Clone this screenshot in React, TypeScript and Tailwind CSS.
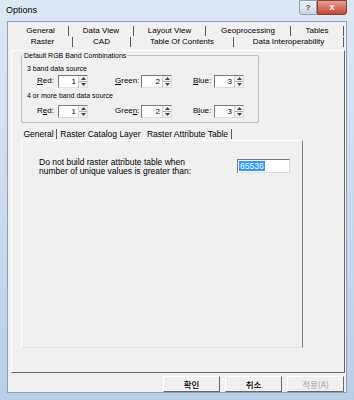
import React from 'react'

const font = { fontFamily: '"Liberation Sans", Arial, sans-serif' }

function Spin({ value, w }: { value: string; w: number }) {
  return (
    <div
      className="flex h-[13px] border border-t-[#7a7a7a] border-l-[#7a7a7a] border-r-[#dcdcdc] border-b-[#dcdcdc] bg-white"
      style={{ width: w }}
    >
      <div className="flex-1 text-right pr-[2px] text-[8px] leading-[11px] text-black">{value}</div>
      <div className="w-[9px] flex flex-col border-l border-[#d0d0d0] bg-[#f0f0f0]">
        <div className="flex-1 flex items-center justify-center border-b border-[#b0b0b0]">
          <svg width="5" height="3" viewBox="0 0 5 3"><path d="M0 3 L2.5 0 L5 3Z" fill="#444" /></svg>
        </div>
        <div className="flex-1 flex items-center justify-center">
          <svg width="5" height="3" viewBox="0 0 5 3"><path d="M0 0 L2.5 3 L5 0Z" fill="#444" /></svg>
        </div>
      </div>
    </div>
  )
}

function U({ children }: { children: React.ReactNode }) {
  return <span className="underline underline-offset-1">{children}</span>
}

function BandRow({ first }: { first: boolean }) {
  return (
    <div className="flex items-center h-[14px] pl-[15px] text-[8px] text-black">
      <span className="w-[21px]">{first ? <><U>R</U>ed:</> : <>R<U>e</U>d:</>}</span>
      <Spin value="1" w={30} />
      <span className="ml-[27px] w-[26px]">{first ? <><U>G</U>reen:</> : <>Gree<U>n</U>:</>}</span>
      <Spin value="2" w={31} />
      <span className="ml-[21px] w-[21px]">{first ? <><U>B</U>lue:</> : <>B<U>l</U>ue:</>}</span>
      <Spin value="3" w={30} />
    </div>
  )
}

function Tab({ label, w, sep = true }: { label: string; w: number; sep?: boolean }) {
  return (
    <div className="flex items-center h-full" style={{ width: w }}>
      <span className="flex-1 text-center whitespace-nowrap">{label}</span>
      {sep && <span className="w-px h-[10px] bg-[#5a5a5a]" />}
    </div>
  )
}

function Button({ label, disabled }: { label: string; disabled?: boolean }) {
  return (
    <div className="w-[57px] h-[16px] border border-t-white border-l-white border-r-[#696969] border-b-[#696969] bg-[#f0f0f0] flex items-center justify-center">
      <span
        className={disabled ? 'text-[8.5px] text-[#a0a0a0]' : 'text-[8.5px] text-black font-medium'}
        style={{ fontFamily: '"Noto Sans CJK KR", "Liberation Sans", sans-serif' }}
      >
        {label}
      </span>
    </div>
  )
}

export default function App() {
  return (
    <div
      className="w-[354px] h-[400px] flex flex-col bg-gradient-to-b from-[#dde8f3] to-[#b9cfe8] overflow-hidden"
      style={font}
    >
      {/* title bar */}
      <div className="h-[21px] flex items-start shrink-0">
        <span className="ml-[6px] mt-[4px] text-[9px] text-black">Options</span>
        <div className="ml-auto mr-[7px] flex">
          <div className="w-[18px] h-[15px] border border-[#8d9cb0] rounded-bl-[3px] bg-gradient-to-b from-[#eef2f7] to-[#c9d5e3] flex items-center justify-center text-[8px] text-[#445] font-bold">
            ?
          </div>
          <div className="w-[30px] h-[15px] border border-[#8a3b3b] rounded-br-[3px] bg-gradient-to-b from-[#e6a292] to-[#c4432f] flex items-center justify-center text-[9px] text-white font-bold">
            x
          </div>
        </div>
      </div>

      {/* client area */}
      <div className="flex-1 mx-[7px] mb-[7px] bg-[#f0f0f0] border border-[#8da0b8] flex flex-col text-black">
        {/* tab rows */}
        <div className="mt-[3px] ml-[5px] h-[11px] flex text-[8px]">
          <Tab label="General" w={56} />
          <Tab label="Data View" w={65} />
          <Tab label="Layout View" w={72} />
          <Tab label="Geoprocessing" w={85} />
          <Tab label="Tables" w={53} />
        </div>
        <div className="ml-[5px] h-[11px] flex text-[8px]">
          <Tab label="Raster" w={60} />
          <Tab label="CAD" w={58} />
          <Tab label="Table Of Contents" w={103} />
          <Tab label="Data Interoperability" w={110} />
        </div>

        {/* outer panel */}
        <div className="mt-[3px] ml-[3px] w-[334px] h-[323px] border border-t-white border-l-white border-r-[#696969] border-b-[#696969] flex flex-col">
          {/* group box */}
          <div className="relative mt-[4px] ml-[9px] w-[238px] h-[68px] border border-[#c0c0c0] rounded-[2px] pt-[8px] flex flex-col">
            <span className="absolute left-[1px] top-[-5px] px-[1px] bg-[#f0f0f0] text-[7px] leading-[9px]">
              Default RGB Band Combinations
            </span>
            <div className="h-[10px] pl-[5px] text-[7px] leading-[10px]">3 band data source</div>
            <BandRow first />
            <div className="mt-[3px] h-[10px] pl-[5px] text-[7px] leading-[10px]">4 or more band data source</div>
            <div className="mt-[3px]">
              <BandRow first={false} />
            </div>
          </div>

          {/* inner tabs */}
          <div className="mt-[5px] ml-[9px] h-[12px] flex text-[8.5px]">
            <Tab label="General" w={36} />
            <Tab label="Raster Catalog Layer" w={87} sep={false} />
            <Tab label="Raster Attribute Table" w={88} />
          </div>

          {/* inner panel */}
          <div className="ml-[9px] w-[282px] h-[208px] border border-t-white border-l-white border-r-[#808080] border-b-[#e4e4e4] flex items-start">
            <div className="mt-[17px] ml-[17px] text-[8.5px] leading-[9px] w-[198px]">
              <div>Do not build raster attribute table when</div>
              <div>number of unique values is greater than:</div>
            </div>
            <div className="mt-[18px] w-[53px] h-[14px] border border-t-[#7a7a7a] border-l-[#7a7a7a] border-r-[#dcdcdc] border-b-[#dcdcdc] bg-white flex items-center pl-px">
              <span className="bg-[#3399ff] text-white text-[8.5px] leading-[10px] px-px">65536</span>
            </div>
          </div>
        </div>

        {/* buttons */}
        <div className="mt-[3px] ml-[155px] flex gap-[5px]">
          <Button label="확인" />
          <Button label="취소" />
          <Button label="적용(A)" disabled />
        </div>
      </div>
    </div>
  )
}
